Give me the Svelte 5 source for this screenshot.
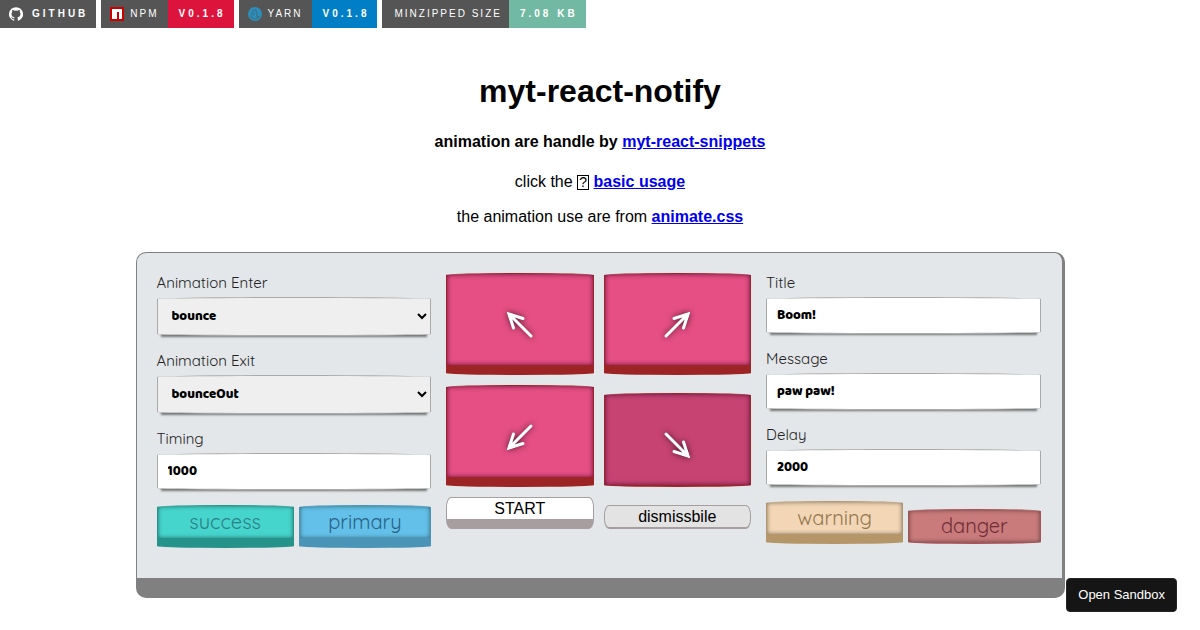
<script>
  let enter = $state('bounce');
  let exit = $state('bounceOut');
  let timing = $state('1000');
  let title = $state('Boom!');
  let message = $state('paw paw!');
  let delay = $state('2000');
  let corner = $state('bottom right');
  let type = $state('danger');
  let dismissible = $state(true);

  const corners = [
    { name: 'top left', angle: 0 },
    { name: 'top right', angle: 90 },
    { name: 'bottom left', angle: 270 },
    { name: 'bottom right', angle: 180 }
  ];
</script>

{#snippet typeButton(name)}
  <button class="key type {name}" class:pressed={type === name} onclick={() => (type = name)}>{name}</button>
{/snippet}

<nav class="badges">
  <a class="badge" href="#github">
    <span class="name strong">
      <svg width="14" height="14" viewBox="0 0 24 24" aria-hidden="true">
        <path fill="#fff" d="M12 .3a12 12 0 0 0-3.8 23.4c.6.1.8-.3.8-.6v-2.2c-3.3.7-4-1.4-4-1.4-.6-1.4-1.4-1.8-1.4-1.8-1-.7.1-.7.1-.7 1.2.1 1.9 1.2 1.9 1.2 1 1.8 2.8 1.3 3.5 1 0-.8.4-1.3.7-1.6-2.7-.3-5.5-1.3-5.5-6 0-1.2.5-2.3 1.3-3.1-.2-.4-.6-1.6 0-3.2 0 0 1-.3 3.4 1.2a11.500 11.500 0 0 1 6 0c2.300-1.500 3.300-1.200 3.300-1.200.7 1.600.2 2.800.1 3.200.8.8 1.300 1.900 1.300 3.100 0 4.700-2.800 5.700-5.500 6 .5.4.9 1.100.9 2.200v3.300c0 .3.1.7.8.6A12 12 0 0 0 12 .3" />
      </svg>
      GITHUB
    </span>
  </a>
  <a class="badge" href="#npm">
    <span class="name">
      <svg width="14" height="14" viewBox="0 0 14 14" aria-hidden="true">
        <path fill="#cb0000" d="M0 0h14v14H0z" />
        <path fill="#fff" d="M2 2h10v10H9V5H7v7H2z" />
      </svg>
      NPM
    </span>
    <span class="value crimson">V0.1.8</span>
  </a>
  <a class="badge" href="#yarn">
    <span class="name">
      <svg width="14" height="14" viewBox="0 0 14 14" aria-hidden="true">
        <circle cx="7" cy="7" r="7" fill="#2c8ebb" />
        <path fill="none" stroke="#45616f" stroke-width=".8" d="M7 2.500c1 0 1.500 1 1 2 1 .8 1.300 2 .8 3.500.5.8.6 1.500.4 2.200 1-.1 1.700-.7 2.500-.7-.8.9-2.200 1.300-3.200 1.800-1.200.5-3 .7-3.500.3-.5-.5.3-.8-.4-1-.9.2-1.700-.1-1.500-.9.100-.6.500-.8.500-1.500C3.600 6.700 4.300 6 5 5.500c-.6-1.300.2-1.700.9-1.900C6.300 3.300 6.400 2.600 7 2.500zM5.500 6c.8.700 1 1.600.4 2.300" />
      </svg>
      YARN
    </span>
    <span class="value blue">V0.1.8</span>
  </a>
  <a class="badge" href="#size">
    <span class="name wide">MINZIPPED SIZE</span>
    <span class="value green">7.08 KB</span>
  </a>
</nav>

<header>
  <h1>myt-react-notify</h1>
  <h4>animation are handle by <a href="#snippets">myt-react-snippets</a></h4>
  <p>click the <span class="quad">?</span> <a href="#usage">basic usage</a></p>
  <p>the animation use are from <a href="#animate">animate.css</a></p>
</header>

<main class="panel">
  <section class="column">
    <div class="field">
      <label for="enter">Animation Enter</label>
      <select id="enter" bind:value={enter}>
        <option>bounce</option>
        <option>flash</option>
        <option>pulse</option>
      </select>
    </div>
    <div class="field">
      <label for="exit">Animation Exit</label>
      <select id="exit" bind:value={exit}>
        <option>bounceOut</option>
        <option>fadeOut</option>
        <option>zoomOut</option>
      </select>
    </div>
    <div class="field">
      <label for="timing">Timing</label>
      <input id="timing" bind:value={timing} />
    </div>
    <div class="types">
      {@render typeButton('success')}
      {@render typeButton('primary')}
    </div>
  </section>

  <section class="pad">
    {#each corners as c}
      <button class="key corner" class:pressed={corner === c.name} aria-label={c.name} onclick={() => (corner = c.name)}>
        <svg width="32" height="32" viewBox="0 0 32 32" aria-hidden="true">
          <g transform="rotate({c.angle} 16 16)">
            <path class="stroke" d="M27 27L6 6M19 9.500L5 5L9.500 19" />
            <path fill="#fff" d="M3.500 3.500L11 5.500L9 9L5.500 11z" />
          </g>
        </svg>
      </button>
    {/each}
    <button class="key action">START</button>
    <button class="key action" class:pressed={dismissible} onclick={() => (dismissible = !dismissible)}>dismissbile</button>
  </section>

  <section class="column">
    <div class="field">
      <label for="title">Title</label>
      <input id="title" bind:value={title} />
    </div>
    <div class="field">
      <label for="message">Message</label>
      <input id="message" bind:value={message} />
    </div>
    <div class="field">
      <label for="delay">Delay</label>
      <input id="delay" bind:value={delay} />
    </div>
    <div class="types">
      {@render typeButton('warning')}
      {@render typeButton('danger')}
    </div>
  </section>
</main>

<a class="sandbox" href="#sandbox">Open Sandbox</a>

<style>
  :global(body) {
    background: #fff;
    color: #000;
    font-family: 'Liberation Sans', Helvetica, Arial, sans-serif;
    font-size: 16px;
  }

  .badges {
    display: flex;
    flex-wrap: wrap;
    gap: 5px;
  }
  .badge {
    display: flex;
    height: 28px;
    color: #fff;
    font-size: 10px;
    line-height: 28px;
    text-decoration: none;
    white-space: nowrap;
  }
  .name {
    display: flex;
    align-items: center;
    gap: 6px;
    padding: 0 9px;
    background: #555;
    letter-spacing: 2px;
  }
  .name.strong {
    gap: 9px;
    padding-right: 8px;
    font-weight: 700;
    letter-spacing: 3px;
  }
  .name.wide {
    padding: 0 7px 0 12px;
  }
  .value {
    padding: 0 8px 0 11px;
    font-weight: 700;
    letter-spacing: 3px;
  }
  .crimson { background: #dc143c; }
  .blue { background: #007ec6; }
  .green { background: #71b9a2; }

  header {
    padding: 44px 16px 25px;
    text-align: center;
  }
  h1,
  h4,
  p {
    margin: 0;
  }
  h1 {
    font-size: 32px;
    line-height: 38px;
  }
  h4 {
    margin-top: 22px;
    font-size: 16px;
    line-height: 20px;
  }
  p {
    margin-top: 15px;
    line-height: 20px;
  }
  h4 + p {
    margin-top: 20px;
  }
  header a {
    color: #0000ee;
    font-weight: 700;
  }
  .quad {
    display: inline-block;
    width: 10px;
    border: 1px solid #000;
    font-size: 14px;
    line-height: 13px;
  }

  .panel {
    box-sizing: border-box;
    max-width: 929px;
    margin: 0 auto;
    padding: 20px 21px 20px 20px;
    display: grid;
    grid-template-columns: 9fr 10fr 9fr;
    gap: 15px;
    align-items: start;
    border: solid #808080;
    border-width: 1px 3px 20px 1px;
    border-radius: 10px;
    background: #e3e7ea;
  }
  .column {
    display: grid;
    gap: 15px;
    padding-bottom: 10px;
  }
  .field {
    display: grid;
    gap: 4px;
  }
  label {
    color: #222;
    font: 400 15px/20px Quicksand, Lato, sans-serif;
  }
  input,
  select {
    box-sizing: border-box;
    width: 100%;
    min-width: 0;
    height: 37px;
    padding: 0 10px;
    border: 1px solid #a9a9a9;
    border-radius: 50% / 2px;
    background: #fff;
    box-shadow: 0 5px 2px -4px #777;
    color: #000;
    font-family: 'Baloo 2', 'Open Sans', sans-serif;
    font-weight: 800;
    line-height: 20px;
  }
  select {
    height: 39px;
    padding: 0 0 0 10px;
    background: #efefef;
  }

  .types {
    display: grid;
    grid-template-columns: 27fr 26fr;
    gap: 5px;
  }
  .key {
    box-sizing: border-box;
    min-width: 0;
    margin: 0;
    padding: 0;
    border-style: solid;
    border-width: 1px 1px 10px;
    border-radius: 50% / 2px;
    cursor: pointer;
  }
  .key.pressed {
    margin-top: 8px;
    border-bottom-width: 2px;
  }
  .type {
    height: 43px;
    box-shadow: inset 0 0 4px rgba(0, 0, 0, 0.5);
    font: 400 20px/24px Quicksand, Lato, sans-serif;
  }
  .type.pressed {
    height: 35px;
  }
  .success {
    border-color: #26938b;
    background: #45d5cc;
    color: #2c7f86;
  }
  .primary {
    border-color: #4a94b7;
    background: #63c0e8;
    color: #2a6288;
  }
  .warning {
    border-color: #b59668;
    background: #f2d6b5;
    color: #93764f;
  }
  .danger {
    border-color: #a45358;
    background: #c97a7a;
    color: #702d37;
  }

  .pad {
    display: grid;
    grid-template-columns: 1fr 1fr;
    gap: 10px;
  }
  .corner {
    display: flex;
    justify-content: center;
    align-items: center;
    height: 102px;
    padding-top: 11px;
    border-color: #9c2424;
    background: #e64f83;
    box-shadow: inset 0 0 5px rgba(60, 0, 40, 0.8);
  }
  .corner.pressed {
    height: 94px;
    background: #c64372;
  }
  .corner svg {
    overflow: visible;
    filter: drop-shadow(0 0 3px rgba(0, 0, 0, 0.7));
  }
  .stroke {
    fill: none;
    stroke: #fff;
    stroke-width: 3;
    stroke-linecap: round;
    stroke-linejoin: miter;
  }
  .action {
    height: 32px;
    border-color: #a79f9f;
    border-radius: 5px / 10px;
    background: #fff;
    color: #000;
    font: 16px/20px 'Liberation Sans', Helvetica, Arial, sans-serif;
  }
  .action.pressed {
    height: 24px;
    background: #e3e3e3;
  }

  .sandbox {
    position: fixed;
    right: 23px;
    bottom: 18px;
    padding: 7px 11px;
    border: 1px solid #252525;
    border-radius: 4px;
    background: #151515;
    color: #fff;
    font-size: 13px;
    line-height: 18px;
    text-decoration: none;
  }
</style>
